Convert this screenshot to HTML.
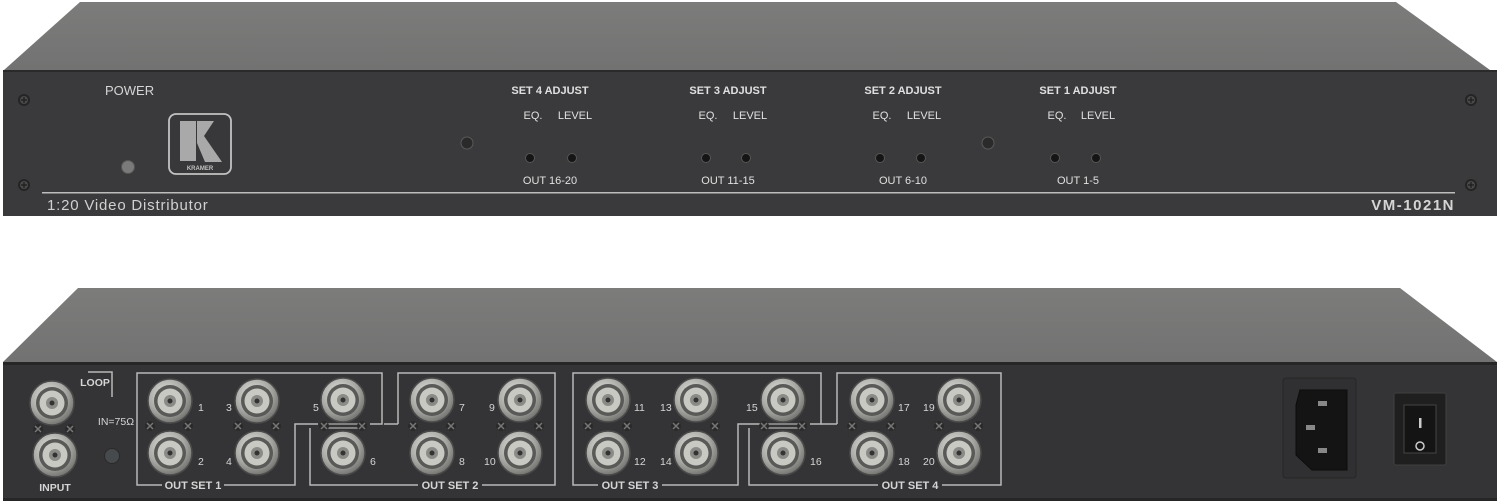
<!DOCTYPE html>
<html><head><meta charset="utf-8"><style>
html,body{margin:0;padding:0;background:#fff;}
svg{display:block}
text{font-family:"Liberation Sans",sans-serif;}
</style></head><body>
<svg width="1500" height="504" viewBox="0 0 1500 504" xmlns="http://www.w3.org/2000/svg">
<defs>
<linearGradient id="top" x1="0" y1="0" x2="0" y2="1"><stop offset="0" stop-color="#7c7c7b"/><stop offset="1" stop-color="#727272"/></linearGradient>
<radialGradient id="bnc" cx="0.4" cy="0.35" r="0.7"><stop offset="0" stop-color="#e0e0dc"/><stop offset="0.6" stop-color="#a8a8a4"/><stop offset="1" stop-color="#6c6c6a"/></radialGradient>
<g id="b">
<circle r="22" fill="url(#bnc)" stroke="#4a4a4a" stroke-width="1.5"/>
<circle r="16" fill="#595957"/>
<circle r="12.5" fill="#c9c9c3"/>
<circle r="6" fill="#8a8a86"/>
<circle r="2.5" fill="#333"/>
</g>
<g id="sc"><circle r="6" fill="#242424"/><circle r="4" fill="#4a4a4a"/><path d="M-3 0H3M0 -3V3" stroke="#1c1c1c" stroke-width="1.2"/></g>
<g id="x"><circle r="5" fill="#2a2a2a"/><path d="M-3 -3L3 3M3 -3L-3 3" stroke="#777" stroke-width="1.5"/></g>
</defs>
<rect width="1500" height="504" fill="#fff"/>

<!-- FRONT UNIT -->
<polygon points="80,2 1396,2 1490,70 4,70" fill="url(#top)"/>
<rect x="3" y="70" width="1494" height="146" fill="#3a3a3c"/>
<rect x="3" y="70" width="1494" height="2" fill="#2a2a2a"/>
<use href="#sc" x="24" y="100"/><use href="#sc" x="24" y="185"/>
<use href="#sc" x="1471" y="100"/><use href="#sc" x="1471" y="185"/>
<text x="105" y="95" font-size="13" fill="#d5d5d5">POWER</text>
<circle cx="128" cy="167" r="6.5" fill="#7a7a7a" stroke="#555"/>
<rect x="169" y="114" width="62" height="60" rx="7" fill="#38383a" stroke="#c2c2c2" stroke-width="1.8"/>
<rect x="180" y="121" width="16" height="40" fill="#a9a9a9"/>
<polygon points="197,121 214,121 204,136 222,162 205,162 197,143" fill="#a9a9a9"/>
<text x="200" y="170" font-size="6" font-weight="bold" fill="#c2c2c2" text-anchor="middle">KRAMER</text>
<circle cx="467" cy="143" r="6" fill="#2a2a2a" stroke="#5a5a5a"/>
<circle cx="988" cy="143" r="6" fill="#2a2a2a" stroke="#5a5a5a"/>
<g font-size="11" font-weight="bold" fill="#e0e0e0" text-anchor="middle">
<text x="550" y="94">SET 4 ADJUST</text><text x="728" y="94">SET 3 ADJUST</text><text x="903" y="94">SET 2 ADJUST</text><text x="1078" y="94">SET 1 ADJUST</text>
</g>
<g font-size="11" fill="#e0e0e0" text-anchor="middle">
<text x="533" y="119">EQ.</text><text x="575" y="119">LEVEL</text>
<text x="708" y="119">EQ.</text><text x="750" y="119">LEVEL</text>
<text x="882" y="119">EQ.</text><text x="924" y="119">LEVEL</text>
<text x="1057" y="119">EQ.</text><text x="1098" y="119">LEVEL</text>
<text x="550" y="184">OUT 16-20</text><text x="728" y="184">OUT 11-15</text><text x="903" y="184">OUT 6-10</text><text x="1078" y="184">OUT 1-5</text>
</g>
<g fill="#151515" stroke="#555">
<circle cx="530" cy="158" r="4.5"/><circle cx="572" cy="158" r="4.5"/>
<circle cx="706" cy="158" r="4.5"/><circle cx="746" cy="158" r="4.5"/>
<circle cx="880" cy="158" r="4.5"/><circle cx="921" cy="158" r="4.5"/>
<circle cx="1055" cy="158" r="4.5"/><circle cx="1096" cy="158" r="4.5"/>
</g>
<rect x="42" y="192" width="1413" height="1.5" fill="#bdbdbd"/>
<text x="47" y="210" font-size="15" fill="#d0d0d0" letter-spacing="0.8">1:20 Video Distributor</text>
<text x="1455" y="210" font-size="15" font-weight="bold" fill="#d5d5d5" text-anchor="end" letter-spacing="1.5">VM-1021N</text>

<!-- REAR UNIT -->
<polygon points="78,288 1400,288 1497,362 3,362" fill="url(#top)"/>
<rect x="3" y="362" width="1494" height="139" fill="#343436"/>
<rect x="3" y="362" width="1494" height="3" fill="#262626"/>
<rect x="3" y="498" width="1494" height="3" fill="#262626"/>

<g fill="none" stroke="#b8b8b8" stroke-width="1.5">
<path d="M88 372H112V397"/>
<path d="M162 485H137V373H382V424H370"/>
<path d="M224 485H295V424H318"/>
<path d="M398 424H398V373H555V485H482"/>
<path d="M418 485H310V428"/>
<path d="M598 485H573V373H821V424H810"/>
<path d="M662 485H738V424H760"/>
<path d="M837 424V373H1001V485H942"/>
<path d="M878 485H749V428"/>
<path d="M326 424H361M326 428H361M766 424H800M766 428H800" stroke="#999"/>
<path d="M384 424H398M821 424H837"/>
</g>

<text x="95" y="386" font-size="10.5" font-weight="bold" fill="#d5d5d5" text-anchor="middle">LOOP</text>
<text x="116" y="425" font-size="10.5" fill="#d5d5d5" text-anchor="middle">IN=75Ω</text>
<circle cx="112" cy="456" r="7.5" fill="#474a4c" stroke="#2a2a2a"/>
<text x="55" y="491" font-size="10.5" font-weight="bold" fill="#d5d5d5" text-anchor="middle">INPUT</text>
<g font-size="11" font-weight="bold" fill="#d5d5d5" text-anchor="middle">
<text x="193" y="489">OUT SET 1</text><text x="450" y="489">OUT SET 2</text>
<text x="630" y="489">OUT SET 3</text><text x="910" y="489">OUT SET 4</text>
</g>

<use href="#b" x="52" y="403"/><use href="#b" x="55" y="455"/>
<use href="#x" x="38" y="429"/><use href="#x" x="70" y="429"/>
<g>
<use href="#b" x="170" y="401"/><use href="#b" x="170" y="453"/>
<use href="#b" x="257" y="401"/><use href="#b" x="257" y="453"/>
<use href="#b" x="343" y="400"/><use href="#b" x="343" y="453"/>
<use href="#b" x="432" y="400"/><use href="#b" x="432" y="453"/>
<use href="#b" x="520" y="400"/><use href="#b" x="520" y="453"/>
<use href="#b" x="608" y="400"/><use href="#b" x="608" y="453"/>
<use href="#b" x="696" y="400"/><use href="#b" x="696" y="453"/>
<use href="#b" x="783" y="400"/><use href="#b" x="783" y="453"/>
<use href="#b" x="872" y="400"/><use href="#b" x="872" y="453"/>
<use href="#b" x="959" y="400"/><use href="#b" x="959" y="453"/>
</g>
<g>
<use href="#x" x="150" y="426"/><use href="#x" x="188" y="426"/>
<use href="#x" x="238" y="426"/><use href="#x" x="276" y="426"/>
<use href="#x" x="324" y="426"/><use href="#x" x="362" y="426"/>
<use href="#x" x="413" y="426"/><use href="#x" x="451" y="426"/>
<use href="#x" x="501" y="426"/><use href="#x" x="539" y="426"/>
<use href="#x" x="588" y="426"/><use href="#x" x="627" y="426"/>
<use href="#x" x="676" y="426"/><use href="#x" x="715" y="426"/>
<use href="#x" x="764" y="426"/><use href="#x" x="802" y="426"/>
<use href="#x" x="852" y="426"/><use href="#x" x="891" y="426"/>
<use href="#x" x="939" y="426"/><use href="#x" x="978" y="426"/>
</g>
<g font-size="10.5" fill="#d5d5d5">
<text x="198" y="411">1</text><text x="198" y="465">2</text>
<text x="226" y="411">3</text><text x="226" y="465">4</text>
<text x="313" y="411">5</text><text x="370" y="465">6</text>
<text x="459" y="411">7</text><text x="459" y="465">8</text>
<text x="489" y="411">9</text><text x="484" y="465">10</text>
<text x="634" y="411">11</text><text x="634" y="465">12</text>
<text x="660" y="411">13</text><text x="660" y="465">14</text>
<text x="746" y="411">15</text><text x="810" y="465">16</text>
<text x="898" y="411">17</text><text x="898" y="465">18</text>
<text x="923" y="411">19</text><text x="923" y="465">20</text>
</g>

<!-- power inlet -->
<rect x="1283" y="378" width="73" height="100" rx="3" fill="#303032" stroke="#262626"/>
<path d="M1300 390H1347V470H1312L1296 455V405Z" fill="#141414" stroke="#0c0c0c"/>
<rect x="1318" y="401" width="9" height="5" fill="#888"/>
<rect x="1306" y="425" width="9" height="5" fill="#888"/>
<rect x="1318" y="448" width="9" height="5" fill="#888"/>
<rect x="1394" y="393" width="52" height="72" rx="2" fill="#1f1f20" stroke="#3f3f40"/>
<rect x="1404" y="405" width="32" height="48" fill="#141414" stroke="#444"/>
<rect x="1419" y="418" width="2.5" height="10" fill="#ccc"/>
<circle cx="1420" cy="446" r="4" fill="none" stroke="#ccc" stroke-width="1.5"/>
</svg>
</body></html>
